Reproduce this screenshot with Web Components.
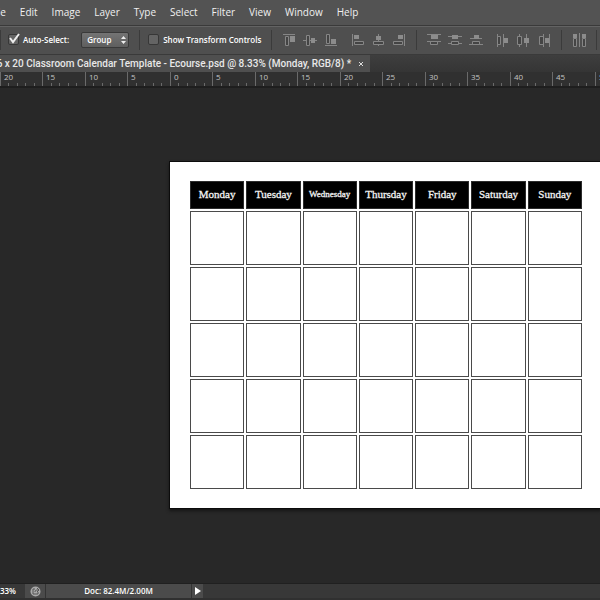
<!DOCTYPE html>
<html lang="en">
<head>
<meta charset="UTF-8">
<title>Classroom Calendar Template</title>
<style>
    body {
        margin: 0;
        height: 100vh;
        overflow: hidden;
        background: #282828;
        color: #e4e4e4;
        font-family: "Open Sans", "Noto Sans", sans-serif;
        --compact-font: Roboto, "Liberation Sans", sans-serif;
    }
</style>
</head>
<body>
<editor-window>
    <menu-bar items="File,Edit,Image,Layer,Type,Select,Filter,View,Window,Help"></menu-bar>
    <options-bar></options-bar>
    <document-tab>16 x 20 Classroom Calendar Template - Ecourse.psd @ 8.33% (Monday, RGB/8) *</document-tab>
    <canvas-ruler labels="20,15,10,5,0,5,10,15,20,25,30,35,40,45,50"></canvas-ruler>
    <canvas-area>
        <calendar-sheet weeks="5"></calendar-sheet>
    </canvas-area>
    <status-bar zoom="8.33%">Doc: 82.4M/2.00M</status-bar>
</editor-window>

<script>
class EditorWindow extends HTMLElement {
    constructor() {
        super();
        this.attachShadow({ mode: 'open' }).innerHTML = `
            <style>
                :host {
                    display: flex;
                    flex-direction: column;
                    height: 100vh;
                    overflow: hidden;
                }
            </style>
            <slot></slot>
        `;
    }
}

class MenuBar extends HTMLElement {
    connectedCallback() {
        const items = this.getAttribute('items').split(',');
        this.attachShadow({ mode: 'open' }).innerHTML = `
            <style>
                :host {
                    display: block;
                    height: 25px;
                    flex: none;
                    background: #535353;
                    border-bottom: 1px solid #3a3a3a;
                    overflow: hidden;
                }

                nav {
                    display: flex;
                    gap: 14px;
                    margin-left: -10px;
                }

                button {
                    padding: 0;
                    border: 0;
                    background: none;
                    color: #f0f0f0;
                    font: 10px/24px "Open Sans", "Noto Sans", sans-serif;
                }
            </style>
            <nav>${items.map(item => `<button type="button">${item}</button>`).join('')}</nav>
        `;
    }
}

// Align icons: "f" is a filled block, "o" an outlined one, "l" a guide line
const ICONS = {
    alignTop: '<path class="l" d="M1 1.5h12"/><path class="o" d="M3.5 3.5h3v9h-3z"/><path class="f" d="M8 3h5v6H8z"/>',
    alignMiddle: '<path class="l" d="M0 7.5h14"/><path class="o" d="M3.5 2.5h3v10h-3z"/><path class="f" d="M8 5h4v5H8z"/>',
    alignBottom: '<path class="l" d="M1 12.5h12"/><path class="o" d="M2.5 1.5h3v9h-3z"/><path class="f" d="M7 6h5v5H7z"/>',
    alignLeft: '<path class="l" d="M2.5 1v12"/><path class="f" d="M4 2h5v4H4z"/><path class="o" d="M4.5 8.5h9v3h-9z"/>',
    alignCenter: '<path class="l" d="M7.5 1v12"/><path class="f" d="M5 3h5v4H5z"/><path class="o" d="M2.5 8.5h10v3h-10z"/>',
    alignRight: '<path class="l" d="M12.5 1v12"/><path class="f" d="M6 2h5v4H6z"/><path class="o" d="M1.5 8.5h9v3h-9z"/>',
    spreadTop: '<path class="l" d="M0 1.5h14M0 8.5h14"/><path class="f" d="M4 2h7v4H4z"/><path class="o" d="M3.5 8.5h7v3h-7z"/>',
    spreadMiddle: '<path class="l" d="M0 3.5h14M0 10.5h14"/><path class="f" d="M4 2h6v4H4z"/><path class="o" d="M3.5 8.5h7v3h-7z"/>',
    spreadBottom: '<path class="l" d="M1 5.5h12M0 11.5h14"/><path class="f" d="M5 2h5v4H5z"/><path class="o" d="M3.5 8.5h7v3h-7z"/>',
    spreadLeft: '<path class="l" d="M2.5 1v13M8.5 1v13"/><path class="o" d="M2.5 3.5h3v8h-3z"/><path class="f" d="M9 5h4v5H9z"/>',
    spreadCenter: '<path class="l" d="M3.5 1v13M10.5 1v13"/><path class="o" d="M1.5 3.5h4v8h-4z"/><path class="f" d="M8 5h5v5H8z"/>',
    spreadRight: '<path class="l" d="M6.5 1v13M12.5 1v13"/><path class="o" d="M2.5 3.5h4v8h-4z"/><path class="f" d="M8 5h4v5H8z"/>',
    autoAlign: '<path class="l" d="M7.5 0v14"/><path class="f" d="M1 1h4v4H1zM10 1h4v4h-4z"/><path class="o" d="M1.5 5.5h3v8h-3zM10.5 5.5h3v8h-3z"/>'
};

class ToolIcon extends HTMLElement {
    connectedCallback() {
        const name = this.getAttribute('name');
        this.attachShadow({ mode: 'open' }).innerHTML = `
            <style>
                :host { display: block; }

                button {
                    display: block;
                    padding: 0;
                    border: 0;
                    background: none;
                }

                svg {
                    display: block;
                    width: 14px;
                    height: 14px;
                    fill: none;
                    stroke: #868686;
                }

                .f { fill: #8c8c8c; stroke: none; }
                .o { fill: #444; }
            </style>
            <button type="button" aria-label="${name}"><svg viewBox="0 0 14 14">${ICONS[name]}</svg></button>
        `;
    }
}

class CheckOption extends HTMLElement {
    connectedCallback() {
        const checked = this.hasAttribute('checked');
        this.attachShadow({ mode: 'open' }).innerHTML = `
            <style>
                :host { display: block; }

                label {
                    display: flex;
                    align-items: center;
                    gap: 4px;
                    white-space: nowrap;
                }

                .box {
                    position: relative;
                    display: flex;
                }

                input {
                    appearance: none;
                    width: 11px;
                    height: 11px;
                    margin: 0;
                    background: #646464;
                    border: 1px solid #373737;
                    border-radius: 2px;
                }

                svg {
                    position: absolute;
                    left: 0;
                    top: -2px;
                    width: 13px;
                    height: 13px;
                    fill: none;
                    stroke: #eee;
                    stroke-width: 2;
                    pointer-events: none;
                }

                input:not(:checked) + svg { display: none; }
            </style>
            <label>
                <span class="box">
                    <input type="checkbox" ${checked ? 'checked' : ''}>
                    <svg viewBox="0 0 13 13"><path d="M2 6l3 4 6-8"/></svg>
                </span>
                <slot></slot>
            </label>
        `;
    }
}

class OptionsBar extends HTMLElement {
    constructor() {
        super();
        const group = names => `<div class="group">${names.map(n => `<tool-icon name="${n}"></tool-icon>`).join('')}</div>`;
        this.attachShadow({ mode: 'open' }).innerHTML = `
            <style>
                :host {
                    display: flex;
                    align-items: center;
                    flex: none;
                    height: 25px;
                    padding-bottom: 2px;
                    border-top: 1px solid #636363;
                    border-bottom: 1px solid #3a3a3a;
                    background: #4f4f4f;
                    color: #fff;
                    font-size: 8px;
                    font-weight: 600;
                    overflow: hidden;
                }

                hr {
                    flex: none;
                    width: 1px;
                    height: 20px;
                    margin: 0 10px;
                    border: 0;
                    background: #3b3b3b;
                }

                hr.edge { margin: 0 7px 0 0; }
                hr.wide { margin-right: 8px; }

                check-option { flex: none; }

                .select {
                    position: relative;
                    flex: none;
                    margin-left: 12px;
                }

                select {
                    appearance: none;
                    display: block;
                    width: 48px;
                    height: 16px;
                    padding: 0 0 0 5px;
                    border: 1px solid #393939;
                    border-radius: 2px;
                    background: linear-gradient(#747474, #5f5f5f);
                    color: #fff;
                    font: 600 8px/14px "Open Sans", "Noto Sans", sans-serif;
                }

                .select svg {
                    position: absolute;
                    right: 3px;
                    top: 4px;
                    width: 5px;
                    height: 8px;
                    fill: #eee;
                    pointer-events: none;
                }

                .tools {
                    display: flex;
                    align-items: center;
                    flex: none;
                }

                .group {
                    display: flex;
                    gap: 7px;
                }

                .group + .group { margin-left: 12px; }
            </style>
            <hr class="edge">
            <check-option checked>Auto-Select:</check-option>
            <div class="select">
                <select aria-label="Auto-Select"><option>Group</option><option>Layer</option></select>
                <svg viewBox="0 0 5 8"><path d="M0 3l2.500-3L5 3zM0 5l2.500 3L5 5z"/></svg>
            </div>
            <hr class="wide">
            <check-option>Show Transform Controls</check-option>
            <hr>
            <div class="tools">
                ${group(['alignTop', 'alignMiddle', 'alignBottom'])}
                ${group(['alignLeft', 'alignCenter', 'alignRight'])}
                <hr>
                ${group(['spreadTop', 'spreadMiddle', 'spreadBottom'])}
                ${group(['spreadLeft', 'spreadCenter', 'spreadRight'])}
                <hr>
                ${group(['autoAlign'])}
                <hr>
            </div>
        `;
    }
}

class DocumentTab extends HTMLElement {
    constructor() {
        super();
        this.attachShadow({ mode: 'open' }).innerHTML = `
            <style>
                :host {
                    display: flex;
                    flex: none;
                    height: 17px;
                    background: linear-gradient(#3e3e3e, #353535);
                    overflow: hidden;
                }

                .tab {
                    display: flex;
                    align-items: center;
                    flex: none;
                    gap: 7px;
                    height: 17px;
                    margin-left: -9px;
                    padding-right: 6px;
                    background: #4f4f4f;
                    color: #e8e8e8;
                    font-family: var(--compact-font);
                    font-size: 10px;
                    font-weight: 500;
                    line-height: 17px;
                    white-space: nowrap;
                }

                button {
                    display: flex;
                    padding: 0;
                    border: 0;
                    background: none;
                }

                svg {
                    width: 6px;
                    height: 6px;
                    stroke: #ddd;
                }
            </style>
            <div class="tab">
                <span><slot></slot></span>
                <button type="button" aria-label="Close"><svg viewBox="0 0 6 6"><path d="M1 1l4 4M5 1L1 5"/></svg></button>
            </div>
        `;
    }
}

class CanvasRuler extends HTMLElement {
    connectedCallback() {
        const labels = this.getAttribute('labels').split(',');
        this.attachShadow({ mode: 'open' }).innerHTML = `
            <style>
                :host {
                    display: flex;
                    flex: none;
                    height: 14px;
                    background: #303030;
                    border-bottom: 2px solid #1e1e1e;
                    color: #c4c4c4;
                    font-size: 8px;
                    line-height: 9px;
                    overflow: hidden;
                }

                .major {
                    display: flex;
                    flex-direction: column;
                    justify-content: space-between;
                    box-sizing: border-box;
                    flex: none;
                    width: 42px;
                    padding-left: 3px;
                    border-left: 1px solid #6a6a6a;
                }

                .major:nth-of-type(even) { width: 43px; }

                .ticks {
                    display: flex;
                    justify-content: space-evenly;
                    height: 3px;
                    margin-left: -3px;
                }

                .ticks i {
                    width: 1px;
                    background: #6a6a6a;
                }
            </style>
            ${labels.map(label => `<div class="major">${label}<div class="ticks"><i></i><i></i><i></i><i></i></div></div>`).join('')}
        `;
    }
}

class CanvasArea extends HTMLElement {
    constructor() {
        super();
        this.attachShadow({ mode: 'open' }).innerHTML = `
            <style>
                :host {
                    display: block;
                    flex: 1;
                    min-height: 0;
                    padding: 74px 0 0 170px;
                    background: #282828;
                    overflow: hidden;
                }
            </style>
            <slot></slot>
        `;
    }
}

class CalendarSheet extends HTMLElement {
    connectedCallback() {
        const days = ['Monday', 'Tuesday', 'Wednesday', 'Thursday', 'Friday', 'Saturday', 'Sunday'];
        const weeks = Number(this.getAttribute('weeks'));
        const week = `<tr>${'<td></td>'.repeat(days.length)}</tr>`;
        this.attachShadow({ mode: 'open' }).innerHTML = `
            <style>
                :host {
                    display: block;
                    padding: 17px 16px 17px 18px;
                    background: #fff;
                    box-shadow: 0 0 0 1px #0c0c0c, 0 2px 3px 1px #151515;
                    font-family: "Liberation Serif", "Times New Roman", serif;
                }

                table {
                    width: 100%;
                    max-width: 396px;
                    table-layout: fixed;
                    border-collapse: separate;
                    border-spacing: 2px;
                }

                th {
                    height: 26px;
                    padding: 0;
                    border: 1px solid #2c2c2c;
                    background: #000;
                    color: #f4f4f4;
                    font-size: 11px;
                    font-weight: 400;
                    line-height: 24px;
                    -webkit-text-stroke: 0.3px #f4f4f4;
                    text-align: center;
                    vertical-align: top;
                }

                th.long { font-size: 9px; }

                td {
                    height: 52px;
                    padding: 0;
                    border: 1px solid #4a4a4a;
                }
            </style>
            <table>
                <thead>
                    <tr>${days.map(d => `<th scope="col"${d === 'Wednesday' ? ' class="long"' : ''}>${d}</th>`).join('')}</tr>
                </thead>
                <tbody>${week.repeat(weeks)}</tbody>
            </table>
        `;
    }
}

class StatusBar extends HTMLElement {
    connectedCallback() {
        this.attachShadow({ mode: 'open' }).innerHTML = `
            <style>
                :host {
                    display: flex;
                    flex: none;
                    height: 14px;
                    border-top: 1px solid #202020;
                    border-bottom: 2px solid #303030;
                    background: #383838;
                    color: #fff;
                    font-size: 8px;
                    font-weight: 600;
                    line-height: 14px;
                    overflow: hidden;
                }

                .zoom {
                    display: flex;
                    justify-content: flex-end;
                    width: 16px;
                    margin-right: 9px;
                }

                button {
                    display: flex;
                    align-items: center;
                    justify-content: center;
                    padding: 0;
                    border: 0;
                    background: #4b4b4b;
                }

                .share { width: 20px; }
                .more { width: 12px; border-left: 1px solid #333; }

                .doc {
                    width: 145px;
                    border-left: 1px solid #333;
                    background: #4b4b4b;
                    text-align: center;
                }
            </style>
            <span class="zoom">${this.getAttribute('zoom')}</span>
            <button class="share" type="button" aria-label="Share">
                <svg width="11" height="11" viewBox="0 0 11 11">
                    <circle cx="5.500" cy="5.500" r="5" fill="#aaa"/>
                    <path d="M5 3H3v5h5V6M5 6c0-2 1-2 3-2M7 2l2 2-2 2" fill="none" stroke="#555"/>
                </svg>
            </button>
            <span class="doc"><slot></slot></span>
            <button class="more" type="button" aria-label="Status options">
                <svg width="6" height="8" viewBox="0 0 6 8"><path d="M0 0l6 4-6 4z" fill="#fff"/></svg>
            </button>
        `;
    }
}

customElements.define('tool-icon', ToolIcon);
customElements.define('check-option', CheckOption);
customElements.define('menu-bar', MenuBar);
customElements.define('options-bar', OptionsBar);
customElements.define('document-tab', DocumentTab);
customElements.define('canvas-ruler', CanvasRuler);
customElements.define('calendar-sheet', CalendarSheet);
customElements.define('canvas-area', CanvasArea);
customElements.define('status-bar', StatusBar);
customElements.define('editor-window', EditorWindow);
</script>
</body>
</html>
